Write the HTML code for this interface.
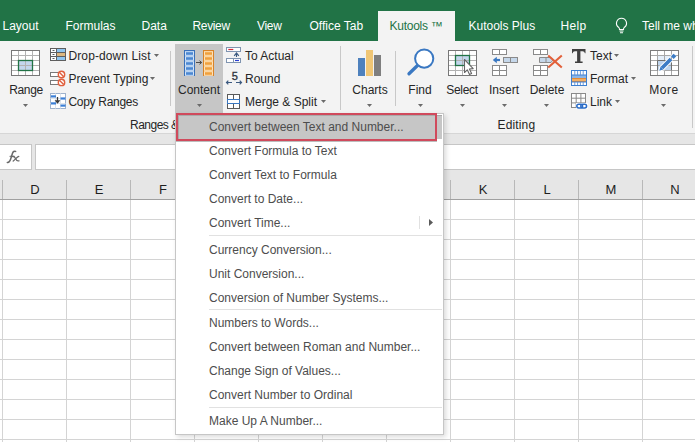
<!DOCTYPE html>
<html><head><meta charset="utf-8">
<style>
*{margin:0;padding:0;box-sizing:border-box}
html,body{width:695px;height:442px;overflow:hidden;background:#fff;font-family:"Liberation Sans",sans-serif}
.a{position:absolute}
.t{position:absolute;font-size:12px;line-height:14px;white-space:nowrap;color:#262626}
.tab{position:absolute;font-size:12px;line-height:14px;white-space:nowrap;color:#fff;top:19px}
.mi{position:absolute;left:209px;font-size:12px;line-height:14px;white-space:nowrap;color:#4d4d4d}
.dd{position:absolute;width:0;height:0;border-left:2.5px solid transparent;border-right:2.5px solid transparent;border-top:3px solid #6a6a6a}
svg{position:absolute;overflow:visible}
</style></head><body>
<!-- title/tab bar -->
<div class="a" style="left:0;top:0;width:695px;height:41px;background:#217346"></div>
<div class="tab" style="left:2.5px">Layout</div>
<div class="tab" style="left:65.5px">Formulas</div>
<div class="tab" style="left:141.5px">Data</div>
<div class="tab" style="left:192.5px;letter-spacing:-.35px">Review</div>
<div class="tab" style="left:257px;letter-spacing:-.3px">View</div>
<div class="tab" style="left:309.5px">Office Tab</div>
<div class="a" style="left:378px;top:11px;width:77px;height:31px;background:#f3f3f3"></div>
<div class="tab" style="left:389.5px;color:#217346;letter-spacing:-.25px">Kutools &#8482;</div>
<div class="tab" style="left:468.5px">Kutools Plus</div>
<div class="tab" style="left:560.5px;letter-spacing:.3px">Help</div>
<svg style="left:615px;top:17px" width="13" height="17" viewBox="0 0 13 17"><path d="M6.5 1.2a5 5 0 0 0-3 9c.8.7 1 1.3 1 2.3h4c0-1 .2-1.6 1-2.3a5 5 0 0 0-3-9z" fill="none" stroke="#fff" stroke-width="1.1"/><path d="M4.5 14h4M5 15.8h3" stroke="#fff" stroke-width="1.1"/></svg>
<div class="tab" style="left:642px">Tell me what</div>

<!-- ribbon -->
<div class="a" style="left:0;top:41px;width:695px;height:92px;background:#f3f3f3"></div>
<div class="a" style="left:0;top:133px;width:695px;height:1px;background:#d6d6d6"></div>

<!-- formula bar -->
<div class="a" style="left:0;top:134px;width:695px;height:36px;background:#e6e6e6"></div>
<div class="a" style="left:-1px;top:144px;width:33px;height:26px;background:#fff;border:1px solid #c6c6c6"></div>
<svg style="left:0;top:0" width="30" height="170" viewBox="0 0 30 170"><g fill="none" stroke="#6a6a6a" stroke-linecap="round"><path d="M7.3 162.4C9.3 162.8 10.4 160.5 11.3 157L12.5 153.2C13.1 151.5 14.2 150.9 15.6 151.4" stroke-width="1.5"/><path d="M10 156.3H14.3" stroke-width="1.1"/><path d="M12.6 156.6C14.2 156 15 157.2 15.8 159C16.5 160.6 17.4 161.3 19 160.8" stroke-width="1.3"/><path d="M18.8 156.3C17.4 156.6 15.2 159.3 13.2 161" stroke-width="1.3"/></g></svg>
<div class="a" style="left:35px;top:144px;width:670px;height:26px;background:#fff;border:1px solid #c6c6c6"></div>

<!-- column headers -->
<div class="a" style="left:0;top:170px;width:695px;height:29px;background:#e6e6e6"></div>
<div class="a" style="left:0;top:199px;width:695px;height:1px;background:#a0a0a0"></div>
<!-- grid -->
<div class="a" style="left:0;top:200px;width:695px;height:242px;background-image:repeating-linear-gradient(to bottom,transparent 0,transparent 19px,#d4d4d4 19px,#d4d4d4 20px)"></div>
<div class="a" style="left:0;top:200px;width:695px;height:242px;background-image:repeating-linear-gradient(to right,transparent 0,transparent 2px,#d4d4d4 2px,#d4d4d4 3px,transparent 3px,transparent 64px)"></div>
<div class="a" style="left:0;top:180px;width:695px;height:19px;background-image:repeating-linear-gradient(to right,transparent 0,transparent 2px,#b8b8b8 2px,#b8b8b8 3px,transparent 3px,transparent 64px)"></div>
<div class="t" style="left:15px;top:182.5px;width:40px;text-align:center;color:#1e1e1e;font-size:13px">D</div>
<div class="t" style="left:79px;top:182.5px;width:40px;text-align:center;color:#1e1e1e;font-size:13px">E</div>
<div class="t" style="left:143px;top:182.5px;width:40px;text-align:center;color:#1e1e1e;font-size:13px">F</div>
<div class="t" style="left:207px;top:182.5px;width:40px;text-align:center;color:#1e1e1e;font-size:13px">G</div>
<div class="t" style="left:271px;top:182.5px;width:40px;text-align:center;color:#1e1e1e;font-size:13px">H</div>
<div class="t" style="left:335px;top:182.5px;width:40px;text-align:center;color:#1e1e1e;font-size:13px">I</div>
<div class="t" style="left:399px;top:182.5px;width:40px;text-align:center;color:#1e1e1e;font-size:13px">J</div>
<div class="t" style="left:463px;top:182.5px;width:40px;text-align:center;color:#1e1e1e;font-size:13px">K</div>
<div class="t" style="left:527px;top:182.5px;width:40px;text-align:center;color:#1e1e1e;font-size:13px">L</div>
<div class="t" style="left:591px;top:182.5px;width:40px;text-align:center;color:#1e1e1e;font-size:13px">M</div>
<div class="t" style="left:655px;top:182.5px;width:40px;text-align:center;color:#1e1e1e;font-size:13px">N</div>
<!-- ribbon content -->
<div class="a" style="left:175px;top:44px;width:48px;height:70px;background:#c6c6c6"></div>
<div class="a" style="left:170px;top:51px;width:1px;height:55px;background:#c8c8c8"></div>
<div class="a" style="left:340px;top:46px;width:1px;height:64px;background:#c8c8c8"></div>
<div class="a" style="left:395px;top:51px;width:1px;height:55px;background:#c8c8c8"></div>
<div class="a" style="left:692px;top:46px;width:1px;height:82px;background:#c8c8c8"></div>

<svg style="left:0;top:0" width="695" height="442" viewBox="0 0 695 442">
<!-- Range -->
<rect x="11.5" y="50.5" width="28" height="25" fill="#fff"/>
<rect x="18.5" y="60.5" width="14" height="10" fill="#c3d6ec"/>
<path d="M18.5 50.5V75.5M25.5 50.5V75.5M32.5 50.5V75.5M11.5 55.5H39.5M11.5 60.5H39.5M11.5 65.5H39.5M11.5 70.5H39.5" stroke="#b2b2b2" fill="none"/>
<rect x="11.5" y="50.5" width="28" height="25" fill="none" stroke="#777"/>
<rect x="18.5" y="60.5" width="14" height="10" fill="none" stroke="#217346" stroke-width="1.3"/>
<!-- Drop-down list -->
<rect x="50" y="48" width="16" height="13" fill="#5e5e5e"/>
<rect x="57" y="49" width="8" height="3" fill="#8fc5f0"/>
<rect x="57" y="53" width="8" height="3" fill="#dcb780"/>
<rect x="57" y="57" width="8" height="3" fill="#8fc5f0"/>
<rect x="51" y="49" width="5" height="3" fill="#fff"/>
<rect x="51" y="53" width="5" height="3" fill="#fff"/>
<rect x="51" y="57" width="5" height="3" fill="#fff"/>
<path d="M52.5 50.5H54.5M52.5 54.5H54.5M52.5 58.5H54.5" stroke="#5e5e5e" stroke-width="1"/>
<!-- Prevent typing -->
<rect x="50.5" y="72.5" width="8" height="4" fill="#fff" stroke="#7a7a7a"/>
<rect x="50.5" y="80.5" width="8" height="4" fill="#fff" stroke="#7a7a7a"/>
<g fill="#fff" stroke="#e0603e" stroke-width="1.4">
<circle cx="61.5" cy="74.5" r="3.2"/><path d="M59.3 72.3L63.7 76.7"/>
<circle cx="61.5" cy="82.4" r="3.2"/><path d="M59.3 80.2L63.7 84.6"/>
</g>
<!-- Copy ranges -->
<rect x="50.5" y="93.5" width="15" height="15" fill="#fff" stroke="#9fb2cc"/>
<path d="M50.5 98.5H65.5M50.5 103.5H65.5M55.5 93.5V108.5M60.5 93.5V108.5" stroke="#dde3ea" stroke-width="1"/>
<rect x="51" y="95.3" width="5" height="2.2" fill="#3b7fd6"/>
<rect x="60.5" y="97.4" width="5" height="2.2" fill="#3b7fd6"/>
<rect x="51" y="102.3" width="5" height="2.2" fill="#3b7fd6"/>
<rect x="60.5" y="104.5" width="5" height="2.2" fill="#3b7fd6"/>
<path d="M57.5 97V101" stroke="#3a3a3a" stroke-width="1.3"/>
<path d="M54.6 100.3H60.4L57.5 103.8Z" fill="#3a3a3a"/>
<!-- Content -->
<rect x="184.5" y="50.5" width="10" height="25" fill="#4c88d2" stroke="#3a70b8"/>
<rect x="185.5" y="51.7" width="8" height="3.6" fill="none" stroke="#d3e4f8" stroke-width="1"/>
<rect x="185.5" y="56.7" width="8" height="3.6" fill="none" stroke="#d3e4f8" stroke-width="1"/>
<rect x="185.5" y="61.7" width="8" height="3.6" fill="none" stroke="#d3e4f8" stroke-width="1"/>
<rect x="185.5" y="66.7" width="8" height="3.6" fill="none" stroke="#d3e4f8" stroke-width="1"/>
<rect x="185.5" y="71.7" width="8" height="3.6" fill="none" stroke="#d3e4f8" stroke-width="1"/>
<rect x="203.5" y="50.5" width="10" height="25" fill="#f0a03e" stroke="#d98328"/>
<rect x="204.5" y="51.7" width="8" height="3.6" fill="none" stroke="#fde3ba" stroke-width="1"/>
<rect x="204.5" y="56.7" width="8" height="3.6" fill="none" stroke="#fde3ba" stroke-width="1"/>
<rect x="204.5" y="61.7" width="8" height="3.6" fill="none" stroke="#fde3ba" stroke-width="1"/>
<rect x="204.5" y="66.7" width="8" height="3.6" fill="none" stroke="#fde3ba" stroke-width="1"/>
<rect x="204.5" y="71.7" width="8" height="3.6" fill="none" stroke="#fde3ba" stroke-width="1"/>
<path d="M196 62.5H201.5M199.5 60.7L201.7 62.5L199.5 64.3" stroke="#4a4a4a" stroke-width="1" fill="none"/>
<!-- To Actual -->
<rect x="226.5" y="47.5" width="14" height="4" fill="#fff" stroke="#7f94b0"/>
<path d="M228.3 49.5H233.3" stroke="#d42a3a" stroke-width="1.2"/>
<path d="M236.5 57V53.5" stroke="#3c5a80" stroke-width="1.1"/><path d="M234.2 55.8L236.5 53L238.8 55.8" stroke="#3c5a80" stroke-width="1.2" fill="none"/>
<rect x="226.5" y="58.5" width="14" height="4" fill="#fff" stroke="#7f94b0"/>
<path d="M233.5 58.5V62.5" stroke="#7f94b0"/>
<path d="M235 60.5H239" stroke="#2a3fd0" stroke-width="1.2"/>
<!-- Round -->
<text x="231.8" y="80" font-family="Liberation Sans" font-size="11" fill="#2f3640" stroke="#2f3640" stroke-width=".35">5</text>
<path d="M226.5 82.5H232M228.3 80.7L226.5 82.5L228.3 84.3M236 82.5H241.5M239.7 80.7L241.5 82.5L239.7 84.3" stroke="#3c5a80" stroke-width="1.2" fill="none"/>
<!-- Merge -->
<rect x="227.5" y="94.5" width="12" height="14" fill="#fff" stroke="#5a5a5a"/>
<path d="M233.5 94.5V99.5M233.5 103.5V108.5" stroke="#5a5a5a"/>
<rect x="227.5" y="99.5" width="12" height="4" fill="#fff" stroke="#3a78c2"/>
<!-- Charts -->
<rect x="358" y="58" width="7" height="18" fill="#4e81bd"/>
<rect x="366" y="50" width="7" height="26" fill="#f0c675"/>
<rect x="374" y="55" width="7" height="21" fill="#7f7f7f"/>
<!-- Find -->
<path d="M417.5 65.5L409 73.8" stroke="#3a78c2" stroke-width="3.3" stroke-linecap="round"/>
<circle cx="424.2" cy="58.6" r="9.1" fill="#fff" stroke="#3a78c2" stroke-width="2"/>
<!-- Select -->
<rect x="448.5" y="50.5" width="28" height="25" fill="#fff"/>
<rect x="455.5" y="55.5" width="14" height="10" fill="#c3d6ec"/>
<path d="M455.5 50.5V75.5M462.5 50.5V75.5M469.5 50.5V75.5M448.5 55.5H476.5M448.5 60.5H476.5M448.5 65.5H476.5M448.5 70.5H476.5" stroke="#b2b2b2" fill="none"/>
<rect x="448.5" y="50.5" width="28" height="25" fill="none" stroke="#777"/>
<rect x="455.5" y="55.5" width="14" height="10" fill="none" stroke="#217346" stroke-width="1.3"/>
<path d="M464.5 59.5V72.5L467.3 69.8L469.5 74.5L471.6 73.5L469.4 69L473.2 68.6Z" fill="#fff" stroke="#666" stroke-width="1.1" stroke-linejoin="round"/>
<!-- Insert -->
<g fill="#fff" stroke="#8a8a8a">
<rect x="492.5" y="49.5" width="7" height="5"/><rect x="499.5" y="49.5" width="7" height="5"/>
<rect x="503.5" y="57.5" width="7" height="5" fill="#c5d7ea"/><rect x="510.5" y="57.5" width="7" height="5" fill="#c5d7ea"/>
<rect x="492.5" y="65.5" width="14" height="10"/><path d="M499.5 65.5V75.5M492.5 70.5H506.5"/>
</g>
<path d="M500 60H496" stroke="#3a78c2" stroke-width="2.2"/><path d="M492.8 60L496.8 56.8V63.2Z" fill="#3a78c2"/>
<!-- Delete -->
<g fill="#fff" stroke="#8a8a8a">
<rect x="533.5" y="49.5" width="7" height="5"/><rect x="540.5" y="49.5" width="7" height="5"/>
<path d="M539.5 57.5H551L553 60L551 62.5H539.5Z" fill="#c5d7ea"/><path d="M546 57.5V62.5"/>
<rect x="533.5" y="65.5" width="14" height="10"/><path d="M540.5 65.5V75.5M533.5 70.5H547.5"/>
</g>
<path d="M548.2 55.5L561.8 67.5M561.8 55.5L548.2 67.5" stroke="#e2603a" stroke-width="2.1"/>
<!-- Text T -->
<path d="M572 49H585.5V53.2H584.9Q584.6 51.2 582.6 51.2H580.4V61.6H582.6V63H575V61.6H577.1V51.2H574.9Q572.9 51.2 572.6 53.2H572Z" fill="#404040"/>
<!-- Format -->
<rect x="571" y="70" width="16" height="16" fill="#3d7fd0"/>
<rect x="572" y="71" width="14" height="14" fill="#fff"/>
<rect x="572" y="75" width="14" height="3" fill="#8cb6e8"/>
<rect x="572" y="78" width="14" height="4" fill="#f3ae62"/>
<path d="M572 78.5H586M572 81.5H586" stroke="#e48a34" stroke-width="1"/>
<path d="M572 75H586M572 82H586" stroke="#3d7fd0" stroke-width="1"/>
<path d="M574.8 71V75M577.6 71V75M580.4 71V75M583.2 71V75M574.8 82V85M577.6 82V85M580.4 82V85M583.2 82V85" stroke="#5a90d8" stroke-width=".9"/>
<!-- Link -->
<g stroke="#8a8a8a" fill="#fff" stroke-width="1">
<rect x="571.5" y="93.5" width="14" height="14"/>
<path d="M576.2 93.5V107.5M580.9 93.5V107.5M571.5 98.2H585.5M571.5 102.9H585.5" fill="none"/>
</g>
<rect x="576" y="103" width="12" height="6" fill="#fff"/>
<g fill="none" stroke="#2a6cc8" stroke-width="1.5">
<rect x="576.8" y="104.2" width="5.8" height="3.8" rx="1.9"/><rect x="580.8" y="104.2" width="5.8" height="3.8" rx="1.9"/>
</g>
<!-- More -->
<rect x="650.5" y="50.5" width="28" height="25" fill="#fff" stroke="#7d7d7d"/>
<rect x="657.5" y="55.5" width="14" height="5" fill="#e4eef9"/>
<rect x="657.5" y="60.5" width="14" height="10" fill="#bfd5ee"/>
<path d="M657.5 50.5V75.5M664.5 50.5V75.5M671.5 50.5V75.5M650.5 55.5H678.5M650.5 60.5H678.5M650.5 65.5H678.5M650.5 70.5H678.5" stroke="#a8a8a8" fill="none"/>
<path d="M650.5 50.5H678.5V75.5H650.5Z" stroke="#7d7d7d" fill="none"/>
<path d="M657.5 70.5V60.5H671.5V70.5" stroke="#6e6e6e" fill="none"/>
<path d="M662 68L671 59M672.3 57.7L675 55" stroke="#fff" stroke-width="5.6"/>
<path d="M658.8 71.2L660.3 66.3L663.7 69.7Z" fill="#fff" stroke="#fff" stroke-width="1.5"/>
<path d="M662 68L671 59M672.3 57.7L675 55" stroke="#3c7cc6" stroke-width="3.8"/>
<path d="M659.2 70.8L660.6 66.6L663.4 69.4Z" fill="#3c7cc6"/>
</svg>
<div class="t" style="left:8px;top:83px;width:36px;text-align:center;letter-spacing:-.35px">Range</div>
<div class="t" style="left:68.5px;top:49px;letter-spacing:.1px">Drop-down List</div>
<div class="t" style="left:68.5px;top:72px">Prevent Typing</div>
<div class="t" style="left:68.5px;top:95px;letter-spacing:-.3px">Copy Ranges</div>
<div class="t" style="left:175px;top:83px;width:48px;text-align:center">Content</div>
<div class="t" style="left:245px;top:49px">To Actual</div>
<div class="t" style="left:245px;top:72px">Round</div>
<div class="t" style="left:245px;top:95px">Merge &amp; Split</div>
<div class="t" style="left:130px;top:118px;letter-spacing:-.5px">Ranges</div><div class="t" style="left:171px;top:118px">&amp;</div>
<div class="t" style="left:345px;top:83px;width:50px;text-align:center">Charts</div>
<div class="t" style="left:400px;top:83px;width:40px;text-align:center">Find</div>
<div class="t" style="left:442px;top:83px;width:40px;text-align:center;letter-spacing:-.3px">Select</div>
<div class="t" style="left:484px;top:83px;width:40px;text-align:center">Insert</div>
<div class="t" style="left:526px;top:83px;width:42px;text-align:center">Delete</div>
<div class="t" style="left:590px;top:49px">Text</div>
<div class="t" style="left:590px;top:72px">Format</div>
<div class="t" style="left:590px;top:95px">Link</div>
<div class="t" style="left:644px;top:83px;width:40px;text-align:center;letter-spacing:.5px">More</div>
<div class="t" style="left:497.5px;top:118px;letter-spacing:.15px">Editing</div>
<svg style="left:23.3px;top:104px" width="5" height="3"><path d="M0 0H5L2.5 3Z" fill="#6a6a6a"/></svg>
<svg style="left:196.5px;top:104px" width="5" height="3"><path d="M0 0H5L2.5 3Z" fill="#6a6a6a"/></svg>
<svg style="left:367.0px;top:104px" width="5" height="3"><path d="M0 0H5L2.5 3Z" fill="#6a6a6a"/></svg>
<svg style="left:417.8px;top:104px" width="5" height="3"><path d="M0 0H5L2.5 3Z" fill="#6a6a6a"/></svg>
<svg style="left:460.1px;top:104px" width="5" height="3"><path d="M0 0H5L2.5 3Z" fill="#6a6a6a"/></svg>
<svg style="left:501.5px;top:104px" width="5" height="3"><path d="M0 0H5L2.5 3Z" fill="#6a6a6a"/></svg>
<svg style="left:543.8px;top:104px" width="5" height="3"><path d="M0 0H5L2.5 3Z" fill="#6a6a6a"/></svg>
<svg style="left:660.9px;top:104px" width="5" height="3"><path d="M0 0H5L2.5 3Z" fill="#6a6a6a"/></svg>
<svg style="left:154.0px;top:54px" width="5" height="3"><path d="M0 0H5L2.5 3Z" fill="#6a6a6a"/></svg>
<svg style="left:150.0px;top:77px" width="5" height="3"><path d="M0 0H5L2.5 3Z" fill="#6a6a6a"/></svg>
<svg style="left:321px;top:100px" width="5" height="3"><path d="M0 0H5L2.5 3Z" fill="#6a6a6a"/></svg>
<svg style="left:614.0px;top:54px" width="5" height="3"><path d="M0 0H5L2.5 3Z" fill="#6a6a6a"/></svg>
<svg style="left:631.0px;top:77px" width="5" height="3"><path d="M0 0H5L2.5 3Z" fill="#6a6a6a"/></svg>
<svg style="left:614.5px;top:100px" width="5" height="3"><path d="M0 0H5L2.5 3Z" fill="#6a6a6a"/></svg>
<!-- menu -->
<div class="a" style="left:175px;top:113px;width:269px;height:322px;background:#fff;border:1px solid #c6c6c6;box-shadow:2px 2px 5px rgba(0,0,0,.15)"></div>
<div class="a" style="left:178px;top:115px;width:264px;height:24px;background:#c6c6c6;box-shadow:inset 1px 1px 0 #a9a9a9"></div>
<div class="a" style="left:176px;top:113px;width:261px;height:28px;border:2px solid #d04a5c"></div>
<div class="a" style="left:176px;top:141px;width:261px;height:1px;background:#bdbdbd"></div>
<div class="a" style="left:209px;top:235px;width:233px;height:1px;background:#e1e1e1"></div>
<div class="a" style="left:209px;top:309px;width:233px;height:1px;background:#e1e1e1"></div>
<div class="a" style="left:209px;top:407px;width:233px;height:1px;background:#e1e1e1"></div>
<div class="a" style="left:419px;top:216px;width:1px;height:13px;background:#e1e1e1"></div>
<svg style="left:429px;top:219px" width="4" height="7"><path d="M0 0L4 3.5L0 7Z" fill="#5a5a5a"/></svg>
<div class="mi" style="top:120px">Convert between Text and Number...</div>
<div class="mi" style="top:144px">Convert Formula to Text</div>
<div class="mi" style="top:168px">Convert Text to Formula</div>
<div class="mi" style="top:192px">Convert to Date...</div>
<div class="mi" style="top:216px">Convert Time...</div>
<div class="mi" style="top:243px">Currency Conversion...</div>
<div class="mi" style="top:266.5px">Unit Conversion...</div>
<div class="mi" style="top:290.5px">Conversion of Number Systems...</div>
<div class="mi" style="top:316px">Numbers to Words...</div>
<div class="mi" style="top:340px">Convert between Roman and Number...</div>
<div class="mi" style="top:364px">Change Sign of Values...</div>
<div class="mi" style="top:388px">Convert Number to Ordinal</div>
<div class="mi" style="top:414px">Make Up A Number...</div>
</body></html>
